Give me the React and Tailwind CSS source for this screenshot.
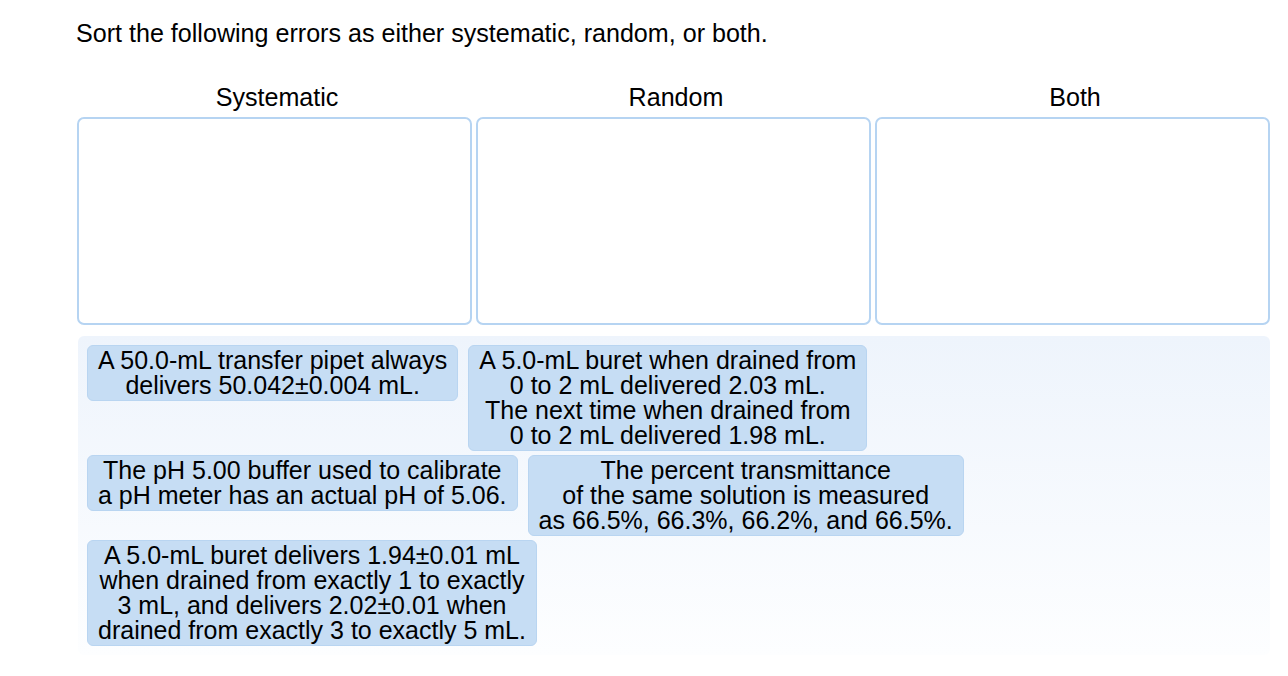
const categories = ['Systematic', 'Random', 'Both']

const items = [
  ['A 50.0-mL transfer pipet always', 'delivers 50.042±0.004 mL.'],
  [
    'A 5.0-mL buret when drained from',
    '0 to 2 mL delivered 2.03 mL.',
    'The next time when drained from',
    '0 to 2 mL delivered 1.98 mL.'
  ],
  ['The pH 5.00 buffer used to calibrate', 'a pH meter has an actual pH of 5.06.'],
  [
    'The percent transmittance',
    'of the same solution is measured',
    'as 66.5%, 66.3%, 66.2%, and 66.5%.'
  ],
  [
    'A 5.0-mL buret delivers 1.94±0.01 mL',
    'when drained from exactly 1 to exactly',
    '3 mL, and delivers 2.02±0.01 when',
    'drained from exactly 3 to exactly 5 mL.'
  ]
]

const App = () => {
  return (
    <div className="min-h-[676px] bg-white text-black font-['Liberation_Sans',Arial,sans-serif] pl-[77px] pr-[18px] pt-[21px]">
      <p className="text-[25.1px] leading-[25px] -ml-[1px]">
        Sort the following errors as either systematic, random, or both.
      </p>

      {/* Drop targets */}
      <div className="mt-[39px] grid grid-cols-3 gap-[4px] w-[1193px]">
        {categories.map((name) => (
          <div key={name} className="flex flex-col">
            <div className="text-center text-[25.1px] leading-[25px] mb-[7px] pl-[5px]">{name}</div>
            <div className="h-[208px] rounded-[7px] border-2 border-[#b6d4f2] bg-white"></div>
          </div>
        ))}
      </div>

      {/* Answer pool */}
      <div className="mt-[11px] ml-[1px] w-[1192px] rounded-[6px] bg-gradient-to-b from-[#eef4fc] to-[#fdfeff] p-[9px] flex flex-wrap items-start gap-x-[10px] gap-y-[4px]">
        {items.map((lines, i) => (
          <div
            key={i}
            className="rounded-[6px] border border-[#b9d5f1] bg-[#c6ddf4] px-[10px] py-[2px] text-center text-[25px] leading-[25px]"
          >
            {lines.map((line, j) => (
              <div key={j}>{line}</div>
            ))}
          </div>
        ))}
      </div>
    </div>
  )
}

export default App
